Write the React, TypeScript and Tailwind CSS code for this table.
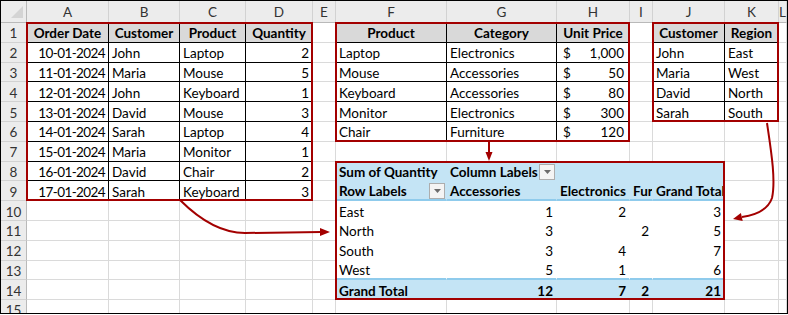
import clsx from "clsx";

const CS = [
  "col-start-1", "col-start-2", "col-start-3", "col-start-4", "col-start-5", "col-start-6", "col-start-7",
  "col-start-8", "col-start-9", "col-start-10", "col-start-11", "col-start-12", "col-start-13",
];
const RS = [
  "row-start-1", "row-start-2", "row-start-3", "row-start-4", "row-start-5", "row-start-6", "row-start-7", "row-start-8",
  "row-start-9", "row-start-10", "row-start-11", "row-start-12", "row-start-13", "row-start-14", "row-start-15", "row-start-16",
];
const LETTERS = ["A", "B", "C", "D", "E", "F", "G", "H", "I", "J", "K", "L"];

const HEAD: Record<number, string> = {
  1: "Order Date", 2: "Customer", 3: "Product", 4: "Quantity",
  6: "Product", 7: "Category", 8: "Unit Price",
  10: "Customer", 11: "Region",
};

const orders = [
  ["10-01-2024", "John", "Laptop", "2"],
  ["11-01-2024", "Maria", "Mouse", "5"],
  ["12-01-2024", "John", "Keyboard", "1"],
  ["13-01-2024", "David", "Mouse", "3"],
  ["14-01-2024", "Sarah", "Laptop", "4"],
  ["15-01-2024", "Maria", "Monitor", "1"],
  ["16-01-2024", "David", "Chair", "2"],
  ["17-01-2024", "Sarah", "Keyboard", "3"],
];

const products = [
  ["Laptop", "Electronics", "1,000"],
  ["Mouse", "Accessories", "50"],
  ["Keyboard", "Accessories", "80"],
  ["Monitor", "Electronics", "300"],
  ["Chair", "Furniture", "120"],
];

const customers = [
  ["John", "East"],
  ["Maria", "West"],
  ["David", "North"],
  ["Sarah", "South"],
];

const pivotHead = ["Row Labels", "Accessories", "Electronics", "Fur", "Grand Total"];
const pivotRows = [
  ["East", "1", "2", "", "3"],
  ["North", "3", "", "2", "5"],
  ["South", "3", "4", "", "7"],
  ["West", "5", "1", "", "6"],
];
const totals = ["Grand Total", "12", "7", "2", "21"];

type Info = { v?: string; al?: "l" | "r" | "c"; b?: boolean; dd?: boolean; usd?: boolean; date?: boolean };

function info(r: number, c: number): Info {
  if (r === 1 && HEAD[c]) return { v: HEAD[c], al: "c", b: true };
  if (r >= 2 && r <= 9 && c <= 4)
    return { v: orders[r - 2][c - 1], al: c === 1 || c === 4 ? "r" : "l", date: c === 1 };
  if (r >= 2 && r <= 6 && c >= 6 && c <= 8)
    return c === 8 ? { v: products[r - 2][2], usd: true } : { v: products[r - 2][c - 6] };
  if (r >= 2 && r <= 5 && c >= 10 && c <= 11) return { v: customers[r - 2][c - 10] };
  if (r === 8 && c === 6) return { v: "Sum of Quantity", b: true };
  if (r === 8 && c === 7) return { v: "Column Labels", b: true, dd: true };
  if (r === 9 && c >= 6 && c <= 10) return { v: pivotHead[c - 6], b: true, dd: c === 6 };
  if (r >= 10 && r <= 13 && c >= 6 && c <= 10) return { v: pivotRows[r - 10][c - 6], al: c === 6 ? "l" : "r" };
  if (r === 14 && c >= 6 && c <= 10) return { v: totals[c - 6], al: c === 6 ? "l" : "r", b: true };
  return {};
}

function region(r: number, c: number) {
  if (c >= 1 && c <= 4 && r >= 1 && r <= 9) return "t";
  if (c >= 6 && c <= 8 && r >= 1 && r <= 6) return "t";
  if (c >= 10 && c <= 11 && r >= 1 && r <= 5) return "t";
  if (c >= 6 && c <= 10 && r >= 8 && r <= 14) return "p";
  return "";
}

function DropButton() {
  return (
    <span className="flex h-[16px] w-[16px] shrink-0 items-center justify-center border border-[#adadad] bg-[#f4f4f4]">
      <svg width="7" height="4" viewBox="0 0 7 4">
        <path d="M0 0h7L3.5 4z" fill="#6b6b6b" />
      </svg>
    </span>
  );
}

function Cell({ r, c }: { r: number; c: number }) {
  const reg = region(r, c);
  const d = info(r, c);
  const pivotBand = reg === "p" && (r === 8 || r === 9 || r === 14);
  return (
    <div
      className={clsx(
        CS[c],
        RS[r],
        "flex items-center overflow-hidden whitespace-nowrap border-r border-b pt-[2px] text-black",
        reg === "t" && "border-black",
        reg === "p" && "border-transparent",
        reg === "" && "border-[#dadada]",
        reg === "p" && (r === 9 || r === 13) && "border-b-2 border-b-[#8fcbec]",
        reg === "t" && r === 1 ? "bg-[#d9d9d9]" : pivotBand ? "bg-[#c4e4f5]" : "bg-white",
        d.b && "font-bold",
        d.date && "tracking-[-0.6px]",
        d.usd ? "justify-between pl-[6px] pr-[5px]" : d.dd ? "justify-between pl-[3px] pr-px" : "px-[3px]",
        d.al === "r" && "justify-end",
        d.al === "c" && "justify-center",
        reg === "p" && (c === 9 || c === 10) && r === 9 && "pr-0",
      )}
    >
      {d.usd ? (
        <>
          <span>$</span>
          <span>{d.v}</span>
        </>
      ) : (
        <>
          <span>{d.v}</span>
          {d.dd && <DropButton />}
        </>
      )}
    </div>
  );
}

export default function App() {
  const rows = Array.from({ length: 15 }, (_, i) => i + 1);
  const cols = Array.from({ length: 12 }, (_, i) => i + 1);
  return (
    <div className="relative h-[315px] w-[788px] bg-white font-[Lato,sans-serif] text-[13.5px] leading-[16px]">
      <div className="grid h-[314px] grid-cols-[26px_82px_71px_66px_67px_23px_111px_110px_73px_23px_72px_54px_1fr] grid-rows-[22px_repeat(14,19.8px)_1fr] overflow-hidden border border-black">
        {/* corner */}
        <div className="col-start-1 row-start-1 flex items-end justify-end border-r border-b border-[#b9b9b9] bg-[#ececec] pr-[3px] pb-[4px]">
          <svg width="12" height="12" viewBox="0 0 12 12">
            <path d="M12 0v12H0z" fill="#d4d4d4" />
          </svg>
        </div>
        {/* column letters */}
        {LETTERS.map((l, i) => (
          <div
            key={l}
            className={clsx(
              CS[i + 1],
              "row-start-1 flex items-center justify-center border-r border-b border-r-[#d2d2d2] border-b-[#b9b9b9] bg-[#ececec] text-[#333]",
            )}
          >
            {l}
          </div>
        ))}
        {/* row numbers */}
        {rows.map((r) => (
          <div
            key={r}
            className={clsx(
              RS[r],
              "col-start-1 flex items-center justify-center border-r border-b border-r-[#b9b9b9] border-b-[#d2d2d2] bg-[#ececec] pt-[2px] text-[#333]",
            )}
          >
            {r}
          </div>
        ))}
        {/* body */}
        {rows.map((r) => cols.map((c) => <Cell key={`${r}-${c}`} r={r} c={c} />))}

        {/* table outlines */}
        <div className="pointer-events-none col-start-2 col-end-6 row-start-2 row-end-11 -mt-px -ml-px border-2 border-[#a30000]" />
        <div className="pointer-events-none col-start-7 col-end-10 row-start-2 row-end-8 -mt-px -ml-px border-2 border-[#a30000]" />
        <div className="pointer-events-none col-start-11 col-end-13 row-start-2 row-end-7 -mt-px -ml-px border-2 border-[#a30000]" />
        <div className="pointer-events-none col-start-7 col-end-12 row-start-9 row-end-16 -mt-px -ml-px border-2 border-[#a30000]" />
      </div>

      {/* connector arrows */}
      <svg className="pointer-events-none absolute top-0 left-0" width="788" height="315">
        <g fill="none" stroke="#a30000" strokeWidth="2">
          <path d="M180 200 C 200 220, 222 233, 245 233 L 321 232" />
          <path d="M489 142 L 489 153" />
          <path d="M767 123 C 771 150, 776 180, 772 198 C 768 210, 755 215, 742 217" />
        </g>
        <g fill="#a30000">
          <polygon points="330,232 320,228 320,236" />
          <polygon points="489,161 485.5,152 492.5,152" />
          <polygon points="733,219 742.7,221 740.9,213.1" />
        </g>
      </svg>
    </div>
  );
}
